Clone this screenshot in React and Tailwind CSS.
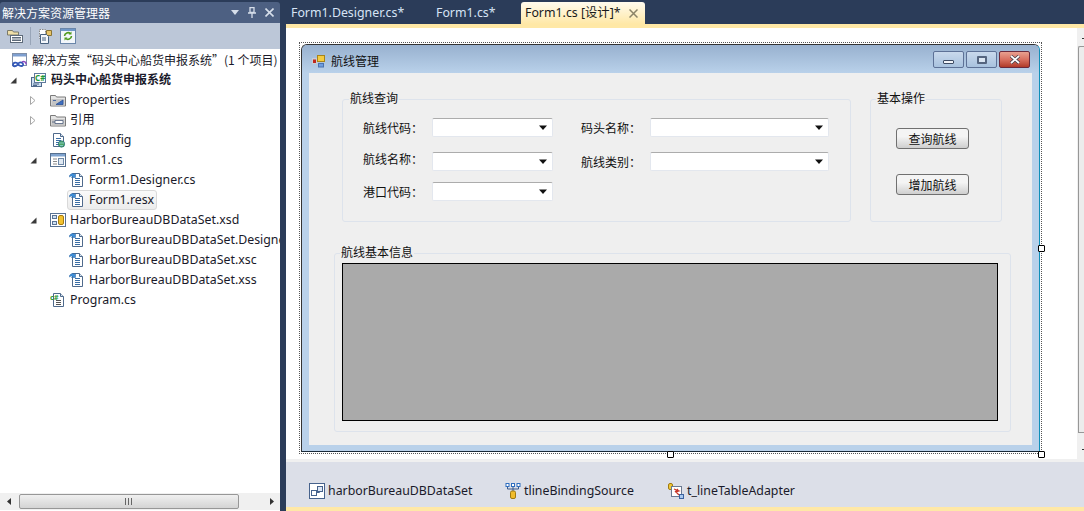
import React from "react";

const ui = { fontFamily: '"Noto Sans", "Noto Sans CJK SC", sans-serif' };
const cjk = { fontFamily: '"Noto Sans CJK SC", sans-serif' };

const Doc = ({ children }) => (
  <svg width="16" height="16" viewBox="0 0 16 16" className="shrink-0">
    <path d="M3.5 1.5h7l3 3v10h-10z" fill="#fff" stroke="#4f6a8c" />
    <path d="M10.5 1.5v3h3" fill="#dbe6f2" stroke="#4f6a8c" />
    {children}
  </svg>
);
const Lines = () => <path d="M6 6.5h5M6 8.5h5M6 10.5h5M6 12.5h5" stroke="#3b6ea5" strokeWidth="1" />;
const DesignerIcon = () => (
  <Doc>
    <Lines />
    <path d="M.5 3.5c2-2.5 4-2.5 5-1l1-1v4h-4l1-1c-.6-.7-1.6-.6-3 .5z" fill="#3f8fd8" stroke="#2a62a0" strokeWidth=".5" />
  </Doc>
);
const ConfigIcon = () => (
  <Doc>
    <Lines />
    <circle cx="11.5" cy="12" r="3.2" fill="#4aa564" stroke="#2c6f7f" strokeWidth=".7" />
    <path d="M9 11h5M10 13.5h3" stroke="#9bd6ec" strokeWidth=".7" />
  </Doc>
);
const CsIcon = () => (
  <Doc>
    <path d="M6 8.5h5M6 10.5h5M6 12.5h5" stroke="#555" strokeWidth="1" />
    <text x="0" y="8" fontSize="7.5" fontWeight="700" fill="#2e9a3a" style={ui}>c#</text>
  </Doc>
);
const SolutionIcon = () => (
  <svg width="17" height="17" viewBox="0 0 17 17" className="shrink-0">
    <rect x="1.5" y="1.5" width="14" height="12" fill="#fff" stroke="#7f8fa8" />
    <rect x="2" y="2" width="13" height="2.5" fill="#7e9fd0" />
    <path d="M2 13c0-3 4-3 5-1s4 3 5 1-3-4-5-1-5 3-5 1z" fill="none" stroke="#3257b8" strokeWidth="1.7" />
    <path d="M11 10c2-1 4.500 0 4 2.500" fill="none" stroke="#8b4bc0" strokeWidth="1.5" />
  </svg>
);
const ProjectIcon = () => (
  <svg width="16" height="16" viewBox="0 0 16 16" className="shrink-0">
    <rect x="1.500" y="5.500" width="10" height="9" fill="#cfe0f2" stroke="#4f6a8c" />
    <rect x="4.500" y="1.500" width="11" height="9" fill="#fff" stroke="#5f7a9c" />
    <text x="5" y="9" fontSize="8" fontWeight="700" fill="#1f9a3a" style={ui}>C#</text>
    <path d="M3 12h6M3 13.500h4" stroke="#4f6a8c" />
  </svg>
);
const FolderIcon = ({ refs }) => (
  <svg width="16" height="16" viewBox="0 0 16 16" className="shrink-0">
    <path d="M.5 3.500h5l1 1.500h9v9H.5z" fill="#e4e4e4" stroke="#7a7a7a" />
    <rect x="1.500" y="7" width="13" height="6.500" fill="#c4c4c4" />
    {refs ? (
      <path d="M5 8.500h8v3H5zM2 10h3" fill="#fff" stroke="#4f5f7f" strokeWidth=".8" />
    ) : (
      <path d="M6 12.500l7-4.500v4.500zM3 8.500h3" fill="#3f6fc0" stroke="#2a5299" strokeWidth=".8" />
    )}
  </svg>
);
const FormIcon = () => (
  <svg width="16" height="16" viewBox="0 0 16 16" className="shrink-0">
    <rect x=".5" y="1.500" width="15" height="13" fill="#fff" stroke="#56708f" />
    <rect x="1" y="2" width="14" height="2.500" fill="#7fa3cf" />
    <path d="M3 7h4M3 9.500h4M3 12h4" stroke="#8a8a8a" />
    <rect x="8.500" y="6.500" width="5" height="6" fill="#dfe8f2" stroke="#6e89a8" />
  </svg>
);
const XsdIcon = () => (
  <svg width="16" height="16" viewBox="0 0 16 16" className="shrink-0">
    <rect x=".5" y="1.500" width="15" height="13" fill="#fff" stroke="#5a7394" />
    <rect x="2.500" y="3.500" width="4" height="3" fill="#cfe0f2" stroke="#5a7394" />
    <rect x="2.500" y="9.500" width="4" height="3" fill="#cfe0f2" stroke="#5a7394" />
    <rect x="8.500" y="3.500" width="5" height="9" rx="1.500" fill="#f2c230" stroke="#a77c10" />
  </svg>
);
const BlankArrow = () => (
  <svg width="6" height="9" viewBox="0 0 6 9"><path d="M.5.500l4.500 4-4.500 4z" fill="#fff" stroke="#a6a6a6" /></svg>
);
const OpenArrow = () => (
  <svg width="7" height="7" viewBox="0 0 7 7"><path d="M6.500.5v6H.5z" fill="#3a3a3a" /></svg>
);

const Tree = [
  { x: "pl-[11px]", gap: "mr-[4px]", icon: <SolutionIcon />, text: "解决方案“码头中心船货申报系统”(1 个项目)", cjk: true },
  { x: "pl-[10px]", arrow: <OpenArrow />, gap: "mr-[5px]", icon: <ProjectIcon />, text: "码头中心船货申报系统", bold: true },
  { x: "pl-[30px]", arrow: <BlankArrow />, gap: "mr-[4px]", icon: <FolderIcon />, text: "Properties" },
  { x: "pl-[30px]", arrow: <BlankArrow />, gap: "mr-[4px]", icon: <FolderIcon refs />, text: "引用" },
  { x: "pl-[30px]", arrow: <span />, gap: "mr-[4px]", icon: <ConfigIcon />, text: "app.config" },
  { x: "pl-[30px]", arrow: <OpenArrow />, gap: "mr-[4px]", icon: <FormIcon />, text: "Form1.cs" },
  { x: "pl-[69px]", gap: "mr-[4px]", icon: <DesignerIcon />, text: "Form1.Designer.cs" },
  { x: "pl-[69px]", gap: "mr-[4px]", icon: <DesignerIcon />, text: "Form1.resx", selected: true },
  { x: "pl-[30px]", arrow: <OpenArrow />, gap: "mr-[4px]", icon: <XsdIcon />, text: "HarborBureauDBDataSet.xsd" },
  { x: "pl-[69px]", gap: "mr-[4px]", icon: <DesignerIcon />, text: "HarborBureauDBDataSet.Designer.cs" },
  { x: "pl-[69px]", gap: "mr-[4px]", icon: <DesignerIcon />, text: "HarborBureauDBDataSet.xsc" },
  { x: "pl-[69px]", gap: "mr-[4px]", icon: <DesignerIcon />, text: "HarborBureauDBDataSet.xss" },
  { x: "pl-[30px]", arrow: <span />, gap: "mr-[4px]", icon: <CsIcon />, text: "Program.cs" },
];

function TreeRow({ row }) {
  return (
    <div className={`relative flex h-5 items-center whitespace-nowrap ${row.x}`}>
      {row.arrow && <span className="flex w-5 shrink-0 items-center">{row.arrow}</span>}
      {row.selected && (
        <span className="absolute left-[67px] top-0 h-[20px] w-[90px] rounded-[3px] border border-[#d9d9d9] bg-gradient-to-b from-[#fafafa] to-[#ececec]" />
      )}
      <span className={`relative flex ${row.gap}`}>{row.icon}</span>
      <span
        className={`relative leading-5 text-[#1a1a2a] ${row.cjk || row.bold ? "text-[12px]" : "text-[12.35px]"} ${row.bold ? "font-bold" : ""}`}
        style={row.cjk ? cjk : undefined}
        lang="zh-CN"
      >
        {row.text}
      </span>
    </div>
  );
}

function Combo({ wide, className = "" }) {
  return (
    <div className={`flex h-[19px] items-center justify-end rounded-[2px] border border-[#e3e7ee] border-t-[#acacac] bg-white pr-[5px] ${wide ? "w-[179px]" : "w-[121px]"} ${className}`}>
      <svg width="8" height="5" viewBox="0 0 8 5"><path d="M0 .5h8L4 5z" fill="#111" /></svg>
    </div>
  );
}

function Label({ children, className = "" }) {
  return <span className={`w-[69px] shrink-0 text-[12px] leading-4 text-[#111] ${className}`}>{children}</span>;
}

function Group({ title, className = "", legend = "left-[6px]", children }) {
  return (
    <div className={`relative rounded-[3px] border border-[#dde3ec] ${className}`} style={cjk}>
      <span className={`absolute top-[-10px] bg-[#efefef] px-px text-[12px] leading-4 text-[#111] ${legend}`}>{title}</span>
      {children}
    </div>
  );
}

function FormButton({ children, className = "" }) {
  return (
    <button className={`flex h-[21px] w-[73px] items-center justify-center rounded-[3px] border border-[#707070] bg-gradient-to-b from-[#f4f4f4] from-40% to-[#cfcfcf] text-[12px] text-[#111] ${className}`}>
      {children}
    </button>
  );
}

const Handle = ({ className }) => (
  <span className={`absolute h-[7px] w-[7px] rounded-[1px] border border-black bg-white ${className}`} />
);

function WinBtn({ children, close }) {
  return (
    <div className={`flex h-[17px] w-[31px] items-center justify-center rounded-[2px] border ${close ? "border-[#6b2a3c] bg-gradient-to-b from-[#e8a090] via-[#d87060] to-[#b03a28]" : "border-[#5d7196] bg-gradient-to-b from-[#c9d9ec] to-[#a8c2de]"}`}>
      {children}
    </div>
  );
}

function TrayItem({ icon, label, className = "" }) {
  return (
    <div className={`flex items-center gap-[3px] ${className}`}>
      {icon}
      <span className="text-[12.35px] leading-5 text-[#1a1a2a]">{label}</span>
    </div>
  );
}

export default function App() {
  return (
    <div className="flex h-[511px] w-[1084px] overflow-hidden bg-[#2b3c59]" style={ui}>
      {/* Solution explorer */}
      <div className="flex w-[280px] shrink-0 flex-col pt-[2px]">
        <div className="flex h-[21px] items-center justify-between rounded-t-[3px] bg-[#4d6082] pl-[2px] pr-[6px] text-[12px] text-white" style={cjk}>
          <span>解决方案资源管理器</span>
          <div className="flex items-center gap-[9px]">
            <svg width="8" height="5" viewBox="0 0 8 5"><path d="M0 0h8L4 5z" fill="#d6deea" /></svg>
            <svg width="8" height="11" viewBox="0 0 8 11"><path d="M2 .5h4v5H2zM0 6h8M4 6v5" fill="none" stroke="#d6deea" strokeWidth="1.300" /></svg>
            <svg width="9" height="9" viewBox="0 0 9 9"><path d="M.5.5l8 8M8.500.5l-8 8" stroke="#d6deea" strokeWidth="1.600" /></svg>
          </div>
        </div>
        <div className="flex h-[26px] items-center bg-[#bcc7d8] pl-[7px]">
          <svg width="16" height="16" viewBox="0 0 16 16"><path d="M.5 2.500h5l1 1.500h5v3H.5z" fill="#f0dfa8" stroke="#7a7a6a" /><rect x="3.500" y="7.500" width="12" height="7" fill="#fff" stroke="#5d6a7a" /><path d="M5 9.500h9M5 11h9M5 12.500h9" stroke="#5d6a7a" /></svg>
          <span className="ml-[7px] h-[18px] w-px bg-[#98a5b8]" />
          <svg className="ml-[6px]" width="16" height="17" viewBox="0 0 16 17"><path d="M2.500 1.500h6v9h-6z" fill="#fff" stroke="#888" strokeDasharray="1.500 1" /><path d="M9.500 2.500h5v5h-5z" fill="#e8c468" stroke="#8a7434" /><path d="M3.500 6.500h6l2 2v7h-8z" fill="#f4f7fb" stroke="#47607e" /><path d="M5 10h4M5 12h4" stroke="#47607e" /></svg>
          <svg className="ml-[7px]" width="16" height="16" viewBox="0 0 16 16"><rect x=".5" y=".5" width="15" height="15" fill="#f2f6fb" stroke="#6a86aa" /><rect x="1" y="1" width="14" height="2" fill="#6f97c9" /><path d="M4.500 8a3.500 3.500 0 0 1 6-2.300M11.500 8a3.500 3.500 0 0 1-6 2.300" fill="none" stroke="#4f9a1e" strokeWidth="1.600" /><path d="M11.500 3.500v3h-3zM4.500 12.500v-3h3z" fill="#4f9a1e" /></svg>
        </div>
        <div className="flex-1 overflow-hidden bg-white pt-px">
          {Tree.map((row) => <TreeRow key={row.text} row={row} />)}
        </div>
        <div className="flex h-[17px] items-center bg-[#f0f0f0] pl-[7px] pr-[6px]">
          <svg width="4" height="7" viewBox="0 0 4 7"><path d="M4 0v7L0 3.500z" fill="#333" /></svg>
          <div className="ml-[8px] flex h-[15px] w-[220px] items-center justify-center rounded-[2px] border border-[#979797] bg-gradient-to-b from-[#f0f0f0] to-[#d4d4d4]">
            <svg width="8" height="7" viewBox="0 0 8 7"><path d="M.5 0v7M3.500 0v7M6.500 0v7" stroke="#666" /></svg>
          </div>
          <span className="flex-1" />
          <svg width="4" height="7" viewBox="0 0 4 7"><path d="M0 0v7l4-3.500z" fill="#333" /></svg>
        </div>
        <div className="h-px bg-white" />
      </div>

      {/* Document area */}
      <div className="ml-[6px] flex flex-1 flex-col">
        <div className="flex h-6 items-end text-[12.35px] text-[#d7e4f5]">
          <div className="flex h-[22px] w-[145px] items-center pl-[5px]">Form1.Designer.cs*</div>
          <div className="flex h-[22px] w-[90px] items-center pl-[5px]">Form1.cs*</div>
          <div className="flex h-[22px] w-[124px] items-center justify-between rounded-t-[3px] bg-gradient-to-b from-[#fffbee] to-[#ffe8a6] pl-[4px] pr-[7px] text-[#1a1a1a]">
            <span className="whitespace-nowrap">Form1.cs [设计]*</span>
            <svg width="9" height="9" viewBox="0 0 9 9"><path d="M.5.5l8 8M8.500.5l-8 8" stroke="#8c8468" strokeWidth="1.500" /></svg>
          </div>
        </div>
        <div className="h-1 bg-[#ffe8a6]" />
        <div className="flex h-[431px] bg-white">
          <div className="flex-1 pl-[15px] pt-4">
            {/* Form under design */}
            <div className="relative flex h-[408px] w-[739px] flex-col rounded-t-[6px] border border-b-[#1a2a3a] border-l-[#333] border-r-[#0f8fb8] border-t-[#333] bg-[#b9d1ea]">
              <span className="pointer-events-none absolute -inset-[3px] border border-dotted border-[#555]" />
              <Handle className="right-[-6px] top-[200px]" />
              <Handle className="bottom-[-7px] left-[365px]" />
              <Handle className="bottom-[-7px] right-[-6px]" />
              <div className="flex h-[28px] shrink-0 items-center rounded-t-[5px] bg-gradient-to-b from-[#98b1cf] to-[#b9d1ea] pl-[10px] pr-[9px]">
                <svg className="mt-[4px]" width="16" height="16" viewBox="0 0 16 16"><rect x="0" y="5" width="5.500" height="6" fill="#c9cdd4" /><rect x="1" y="6.500" width="3" height="3.500" fill="#c0281e" /><rect x="5.500" y="2.500" width="7" height="6" fill="#f4cb40" stroke="#a88418" /><rect x="6.500" y="10.500" width="5" height="3.500" fill="#6f9ee0" stroke="#4a72b0" /></svg>
                <span className="ml-[3px] mt-[4px] text-[12px] text-[#111]" style={cjk}>航线管理</span>
                <div className="ml-auto flex gap-[2px] pt-[1px]">
                  <WinBtn><span className="mt-[4px] h-[4px] w-[11px] rounded-[1px] border border-[#3d4b63] bg-[#f2f4f8]" /></WinBtn>
                  <WinBtn><span className="h-[8px] w-[10px] rounded-[1px] border-2 border-[#55657f] bg-[#dbe6f2]" /></WinBtn>
                  <WinBtn close>
                    <svg width="12" height="9" viewBox="0 0 12 9"><path d="M2 1l8 7M10 1l-8 7" stroke="#3d3d48" strokeWidth="3.200" /><path d="M2 1l8 7M10 1l-8 7" stroke="#fff" strokeWidth="1.800" /></svg>
                  </WinBtn>
                </div>
              </div>
              <div className="mx-[7px] mb-[6px] flex-1 bg-[#efefef] pt-[26px]" style={cjk}>
                <div className="ml-[33px] flex">
                  <Group title="航线查询" className="h-[123px] w-[509px] pl-5 pt-[18px]">
                    <div className="flex h-[19px] items-center">
                      <Label>航线代码：</Label><Combo />
                      <Label className="ml-[28px]">码头名称：</Label><Combo wide />
                    </div>
                    <div className="mt-[15px] flex h-[19px] items-center">
                      <Label className="pb-[6px]">航线名称：</Label><Combo />
                      <Label className="ml-[28px]">航线类别：</Label><Combo wide />
                    </div>
                    <div className="mt-[11px] flex h-[19px] items-center">
                      <Label>港口代码：</Label><Combo />
                    </div>
                  </Group>
                  <Group title="基本操作" className="ml-[19px] flex h-[123px] w-[132px] flex-col items-center gap-[25px] pr-[7px] pt-[28px]" legend="left-[5px]">
                    <FormButton>查询航线</FormButton>
                    <FormButton>增加航线</FormButton>
                  </Group>
                </div>
                <Group title="航线基本信息" className="ml-[25px] mt-[31px] h-[179px] w-[677px] pl-[7px] pt-[9px]" legend="left-[5px]">
                  <div className="h-[158px] w-[656px] border border-black bg-[#aaaaaa]" />
                </Group>
              </div>
            </div>
          </div>
          <div className="relative flex w-[7px] flex-col bg-[#f0f0f0] pl-px">
            <span className="absolute right-0 top-[10px] h-px w-[2px] bg-[#333]" />
            <span className="absolute right-0 top-[421px] h-px w-[2px] bg-[#333]" />
            <div className="h-[18px]" />
            <div className="h-[387px] rounded-tl-[2px] border-b border-l border-t border-[#979797] bg-[#ececec]" />
          </div>
        </div>
        <div className="h-[3px] bg-[#f0f0f0]" />
        <div className="flex h-[45px] items-center bg-[#dcdfe8] pl-[23px] pt-[13px]">
          <TrayItem
            className="w-[196px]"
            label="harborBureauDBDataSet"
            icon={<svg width="16" height="16" viewBox="0 0 16 16"><rect x=".5" y=".5" width="15" height="15" fill="#fff" stroke="#46628c" /><rect x="2.500" y="7.500" width="5" height="5" fill="#fff" stroke="#46628c" /><rect x="8.500" y="3.500" width="5" height="5" fill="#dce6f4" stroke="#46628c" /><path d="M7.500 9.500h3v-1" fill="none" stroke="#46628c" /></svg>}
          />
          <TrayItem
            className="w-[163px]"
            label="tlineBindingSource"
            icon={<svg width="16" height="16" viewBox="0 0 16 16"><path d="M2.500 3v3h11V3M8 3v5" fill="none" stroke="#3a5a8c" /><rect x="1" y=".5" width="3" height="3" fill="#fff" stroke="#2f6fc0" /><rect x="6.500" y=".5" width="3" height="3" fill="#fff" stroke="#2f6fc0" /><rect x="12" y=".5" width="3" height="3" fill="#fff" stroke="#2f6fc0" /><rect x="5.500" y="8" width="5" height="7.500" rx="1.500" fill="#f0bc2c" stroke="#a07a10" /></svg>}
          />
          <TrayItem
            label="t_lineTableAdapter"
            icon={<svg width="16" height="16" viewBox="0 0 16 16"><rect x=".5" y=".5" width="4" height="6" rx="1.500" fill="#f0c838" stroke="#a07a10" /><rect x="3.500" y="3.500" width="10" height="10" fill="#fff" stroke="#6a7a92" /><path d="M6 6l5 2-3 1 3 3M10 6l-3 3" fill="none" stroke="#c8372a" strokeWidth="1.200" /><rect x="11.500" y="11.500" width="4" height="4" fill="#a8c8ee" stroke="#3a62a0" /></svg>}
          />
        </div>
        <div className="h-1 bg-[#ffe8a6]" />
      </div>
    </div>
  );
}
